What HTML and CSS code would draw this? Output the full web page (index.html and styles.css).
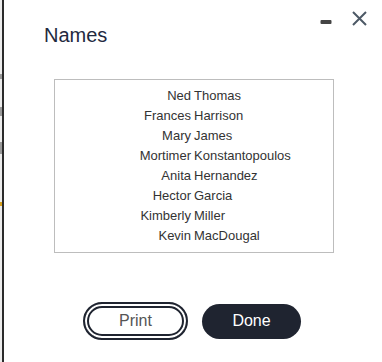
FILE: index.html
```html
<!DOCTYPE html>
<html>
<head>
<meta charset="utf-8">
<link rel="stylesheet" href="styles.css">
</head>
<body>
<div class="page">
  <div class="backdrop">
    <span class="frag f1"></span>
    <span class="frag f2"></span>
    <span class="frag f3"></span>
    <span class="frag f4"></span>
  </div>
  <div class="dialog">
    <div class="header">
      <h1 class="title">Names</h1>
      <div class="actions">
        <svg class="icon-min" width="13" height="14" viewBox="0 0 13 14"><rect x="0.5" y="9" width="11" height="4" rx="1" fill="#444"/></svg>
        <svg class="icon-close" width="15" height="15" viewBox="0 0 15 15"><path d="M1 1 L14 14 M14 1 L1 14" stroke="#4d5966" stroke-width="2" fill="none"/></svg>
      </div>
    </div>
    <div class="names">
      <span class="first">Ned</span><span class="last">Thomas</span>
      <span class="first">Frances</span><span class="last">Harrison</span>
      <span class="first">Mary</span><span class="last">James</span>
      <span class="first">Mortimer</span><span class="last">Konstantopoulos</span>
      <span class="first">Anita</span><span class="last">Hernandez</span>
      <span class="first">Hector</span><span class="last">Garcia</span>
      <span class="first">Kimberly</span><span class="last">Miller</span>
      <span class="first">Kevin</span><span class="last">MacDougal</span>
    </div>
    <div class="footer">
      <button class="btn btn-print">Print</button>
      <button class="btn btn-done">Done</button>
    </div>
  </div>
</div>
</body>
</html>
```

FILE: styles.css
```css
html, body {
  margin: 0;
  padding: 0;
  background: #fff;
}
body {
  font-family: "Liberation Sans", Arial, sans-serif;
  width: 382px;
  height: 362px;
  overflow: hidden;
}
.page {
  display: flex;
  height: 362px;
}
.backdrop {
  width: 2px;
  background: #ececec;
  display: flex;
  flex-direction: column;
}
.frag {
  display: block;
  width: 2px;
  background: #9a9a9a;
}
.f1 { height: 5px; margin-top: 74px; }
.f2 { height: 9px; margin-top: 28px; }
.f3 { height: 12px; margin-top: 26px; }
.f4 { height: 4px; margin-top: 48px; background: #d7a21f; }
.dialog {
  flex: 1;
  border-left: 2px solid #2b2b2b;
  background: #fff;
  display: flex;
  flex-direction: column;
}
.header {
  display: flex;
  align-items: flex-start;
}
.title {
  margin: 23px 0 0 40px;
  font-size: 20px;
  line-height: 24px;
  font-weight: normal;
  color: #1f2940;
}
.actions {
  margin: 11px 15px 0 auto;
  display: flex;
  align-items: flex-start;
  gap: 19px;
}
.icon-min, .icon-close { display: block; }
.names {
  margin: 32px 0 0 50px;
  width: 280px;
  box-sizing: border-box;
  border: 1px solid #bdbdbd;
  padding: 6px 0 6px;
  display: grid;
  grid-template-columns: 1fr 1fr;
  font-size: 13px;
  line-height: 20px;
  color: #333;
}
.first {
  text-align: right;
  padding-right: 3px;
}
.last {
  text-align: left;
}
.footer {
  display: flex;
  align-items: center;
  gap: 14px;
  margin-top: 49px;
  padding-left: 79px;
}
.btn {
  font-family: "Liberation Sans", Arial, sans-serif;
  font-size: 16px;
  border-radius: 20px;
  cursor: pointer;
}
.btn-print {
  width: 105px;
  height: 38px;
  background: #fff;
  color: #555;
  border: 2px solid #1f2430;
  box-shadow: inset 0 0 0 2px #fff, inset 0 0 0 4px #1f2430;
}
.btn-done {
  width: 99px;
  height: 35px;
  background: #1f2430;
  color: #fff;
  border: none;
}
```
